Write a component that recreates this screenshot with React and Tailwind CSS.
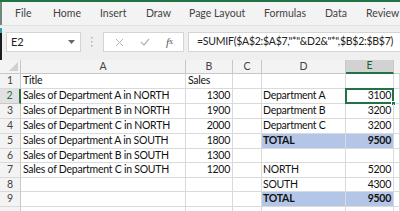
import React from "react";

const cellFont = { fontFamily: "Lato, 'Liberation Sans', sans-serif" };
const uiFont = { fontFamily: "Lato, 'Open Sans', sans-serif" };

const rows = [
  { n: "1", a: "Title", b: "Sales", bText: true, h: "h-[15px]" },
  { n: "2", a: "Sales of Department A in NORTH", b: "1300", d: "Department A", e: "3100", sel: true, h: "h-[15px]" },
  { n: "3", a: "Sales of Department B in NORTH", b: "1900", d: "Department B", e: "3200", h: "h-[15px]" },
  { n: "4", a: "Sales of Department C in NORTH", b: "2000", d: "Department C", e: "3200", h: "h-[15px]" },
  { n: "5", a: "Sales of Department A in SOUTH", b: "1800", d: "TOTAL", e: "9500", total: true, h: "h-[15px]" },
  { n: "6", a: "Sales of Department B in SOUTH", b: "1300", h: "h-[14px]" },
  { n: "7", a: "Sales of Department C in SOUTH", b: "1200", d: "NORTH", e: "5200", h: "h-[15px]" },
  { n: "8", d: "SOUTH", e: "4300", h: "h-[14px]" },
  { n: "9", d: "TOTAL", e: "9500", total: true, h: "h-[15px]" },
  { n: "", h: "h-[15px]" },
];

const tabs = [
  ["File", "w-[38px]"],
  ["Home", "w-[47px]"],
  ["Insert", "w-[46px]"],
  ["Draw", "w-[43px]"],
  ["Page Layout", "w-[75px]"],
  ["Formulas", "w-[61px]"],
  ["Data", "w-[41px]"],
  ["Review", "w-[40px]"],
];

function Row({ r }) {
  const base = "border-r border-b border-[#dadada] flex items-center shrink-0 overflow-hidden whitespace-nowrap";
  const tot = "bg-[#b4c6e7] border-[#b4c6e7] font-bold";
  return (
    <div className={`flex ${r.h} text-[10.5px] tracking-[-0.25px] text-[#111]`} style={cellFont}>
      <div
        className={`w-[21px] shrink-0 flex items-center justify-center border-b text-[10.5px] tracking-normal ${
          r.sel
            ? "bg-[#e1e1e1] text-[#217346] border-r-2 border-r-[#217346] border-b-[#c8c8c8]"
            : "bg-[#f3f3f3] text-[#444] border-r border-r-[#c8c8c8] border-b-[#dadada]"
        }`}
      >
        {r.n}
      </div>
      <div className={`${base} w-[165px] pl-[2px]`}>{r.a}</div>
      <div className={`${base} w-[47px] ${r.bText ? "pl-[2px]" : "justify-end pr-[2px]"}`}>{r.b}</div>
      <div className={`${base} w-[29px]`}></div>
      <div className={`${base} w-[84px] pl-[1px] ${r.total ? tot : ""}`}>{r.d}</div>
      <div className={`${base} w-[48px] justify-end pr-[2px] relative overflow-visible ${r.total ? tot : ""}`}>
        {r.e}
        {r.sel && (
          <>
            <div className="absolute -top-[1px] -left-[1px] -right-[1px] -bottom-[1px] border-2 border-[#217346]"></div>
            <div className="absolute -right-[3px] -bottom-[3px] w-[5px] h-[5px] bg-[#217346] border border-white"></div>
          </>
        )}
      </div>
      <div className={`${base} flex-1`}></div>
    </div>
  );
}

export default function App() {
  return (
    <div className="w-[400px] h-[211px] overflow-hidden relative bg-white">
      <div className="h-[2px] bg-[#217346]"></div>
      {/* ribbon tabs */}
      <div className="h-[23px] bg-[#f3f3f3] flex items-center pl-[15px] text-[10.5px] text-[#444]" style={uiFont}>
        {tabs.map(([t, w]) => (
          <div key={t} className={`${w} shrink-0 whitespace-nowrap`}>
            {t}
          </div>
        ))}
      </div>
      {/* formula bar */}
      <div className="h-[35px] bg-[#efefef] border-t border-[#e1e1e1] flex items-start pt-[6px] pl-[6px]" style={uiFont}>
        <div className="w-[75px] h-[20px] bg-white border border-[#d4d4d4] flex items-center justify-between pl-[4px] pr-[5px] text-[11px] text-[#222] shrink-0">
          <span>E2</span>
          <svg width="7" height="4" viewBox="0 0 7 4">
            <path d="M0 0 L7 0 L3.5 4 Z" fill="#666" />
          </svg>
        </div>
        <div className="w-[22px] h-[20px] flex items-center justify-center shrink-0">
          <svg width="2" height="10" viewBox="0 0 2 10">
            <rect x="0" y="0" width="1.5" height="1.5" fill="#b0b0b0" />
            <rect x="0" y="4" width="1.5" height="1.5" fill="#b0b0b0" />
            <rect x="0" y="8" width="1.5" height="1.5" fill="#b0b0b0" />
          </svg>
        </div>
        <div className="w-[81px] h-[20px] bg-white border border-[#d4d4d4] flex items-center shrink-0">
          <div className="w-[28px] flex justify-center pl-[3px]">
            <svg width="9" height="9" viewBox="0 0 9 9">
              <path d="M1 1 L8 8 M8 1 L1 8" stroke="#b5b5b5" strokeWidth="1" fill="none" />
            </svg>
          </div>
          <div className="w-[26px] flex justify-center">
            <svg width="10" height="8" viewBox="0 0 10 8">
              <path d="M1 4 L4 7 L9 1" stroke="#b5b5b5" strokeWidth="1.2" fill="none" />
            </svg>
          </div>
          <div
            className="flex-1 flex justify-center text-[11px] italic text-[#555] pr-[2px]"
            style={{ fontFamily: "'Liberation Serif', serif" }}
          >
            f<span className="text-[8px] not-italic relative top-[2px]">x</span>
          </div>
        </div>
        <div className="ml-[4px] w-[260px] h-[20px] bg-white border border-[#d4d4d4] flex items-center pl-[8px] text-[10.5px] tracking-[-0.25px] text-[#222] whitespace-nowrap shrink-0 overflow-hidden">
          =SUMIF($A$2:$A$7,"*"&amp;D2&amp;"*",$B$2:$B$7)
        </div>
      </div>
      {/* column header */}
      <div className="flex h-[14px] text-[10.5px] text-[#444] bg-[#f3f3f3]" style={cellFont}>
        <div className="w-[21px] shrink-0 border-r border-b border-[#c8c8c8] relative">
          <svg className="absolute right-[2px] bottom-[2px]" width="9" height="9" viewBox="0 0 9 9">
            <path d="M9 0 L9 9 L0 9 Z" fill="#d0d0d0" />
          </svg>
        </div>
        <div className="w-[165px] shrink-0 border-r border-b border-[#c8c8c8] flex items-center justify-center">A</div>
        <div className="w-[47px] shrink-0 border-r border-b border-[#c8c8c8] flex items-center justify-center">B</div>
        <div className="w-[29px] shrink-0 border-r border-b border-[#c8c8c8] flex items-center justify-center">C</div>
        <div className="w-[84px] shrink-0 border-r border-b border-[#c8c8c8] flex items-center justify-center">D</div>
        <div className="w-[48px] shrink-0 border-r border-[#c8c8c8] border-b-2 border-b-[#217346] bg-[#d2d2d2] flex items-center justify-center text-[#1d5e3a]">
          E
        </div>
        <div className="flex-1 border-b border-[#c8c8c8]"></div>
      </div>
      {rows.map((r, i) => (
        <Row key={i} r={r} />
      ))}
      {/* window edge strip */}
      <div className="absolute left-0 top-[2px] w-[2px] h-[23px] bg-[#6d8a7b]"></div>
      <div className="absolute left-0 top-[28px] w-[2px] h-[5px] bg-[#2fa3b5]"></div>
      <div className="absolute left-0 top-[33px] w-[2px] h-[27px] bg-[#1b1b1b]"></div>
    </div>
  );
}
